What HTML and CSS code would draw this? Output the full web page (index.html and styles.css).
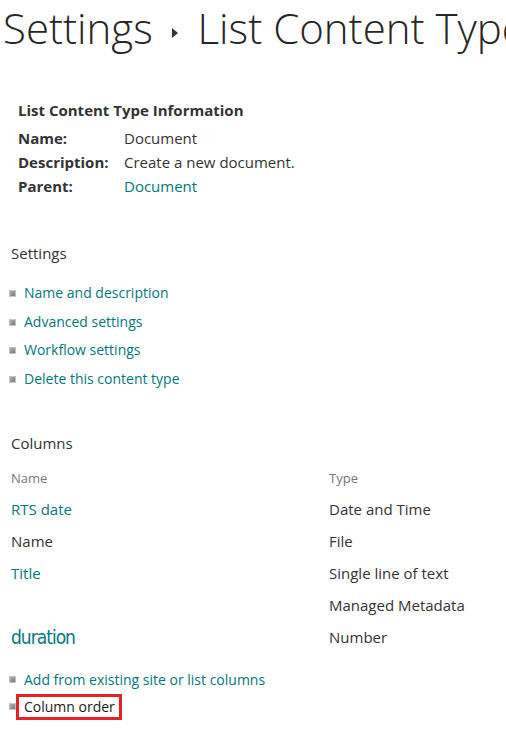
FILE: index.html
```html
<!DOCTYPE html>
<html lang="en">
<head>
    <meta charset="UTF-8">
    <title>Settings - List Content Type</title>
    <link rel="stylesheet" href="styles.css">
</head>
<body>
<div class="page">
    <h1 class="page-title">Settings <span class="crumb-arrow"></span> List Content Type</h1>

    <div class="info">
        <h2>List Content Type Information</h2>
        <div class="info-grid">
            <span class="label">Name:</span><span>Document</span>
            <span class="label">Description:</span><span>Create a new document.</span>
            <span class="label">Parent:</span><a href="#">Document</a>
        </div>
    </div>

    <h3 class="section-title">Settings</h3>
    <ul class="links">
        <li><a href="#">Name and description</a></li>
        <li><a href="#">Advanced settings</a></li>
        <li><a href="#">Workflow settings</a></li>
        <li><a href="#">Delete this content type</a></li>
    </ul>

    <h3 class="section-title columns-title">Columns</h3>
    <table class="columns">
        <thead>
            <tr><th>Name</th><th>Type</th></tr>
        </thead>
        <tbody>
            <tr><td><a href="#">RTS date</a></td><td>Date and Time</td></tr>
            <tr><td>Name</td><td>File</td></tr>
            <tr><td><a href="#">Title</a></td><td>Single line of text</td></tr>
            <tr><td></td><td>Managed Metadata</td></tr>
            <tr><td><a href="#" class="big">duration</a></td><td>Number</td></tr>
        </tbody>
    </table>

    <ul class="links bottom-links">
        <li><a href="#">Add from existing site or list columns</a></li>
        <li><a href="#" class="marked">Column order</a></li>
    </ul>
</div>
</body>
</html>
```

FILE: styles.css
```css
body {
    margin: 0;
    font-family: "Open Sans", "Noto Sans", sans-serif;
    font-size: 14px;
    color: #333;
    background: #fff;
    overflow: hidden;
}

a {
    color: #03787c;
    text-decoration: none;
}

.page {
    width: 506px;
}

.page-title {
    margin: -1px 0 0;
    padding: 0 0 0 3px;
    font-size: 42px;
    font-weight: 300;
    color: #262626;
    white-space: nowrap;
    overflow: hidden;
}

.crumb-arrow {
    display: inline-block;
    width: 0;
    height: 0;
    margin: 0 9px 0 8px;
    border-top: 5px solid transparent;
    border-bottom: 5px solid transparent;
    border-left: 6px solid #333;
    vertical-align: middle;
}

.info {
    padding: 42px 0 0 18px;
}

.info h2 {
    margin: 0 0 4px;
    font-size: 15px;
    font-weight: 700;
    line-height: 24px;
}

.info-grid {
    display: grid;
    grid-template-columns: 106px auto;
    line-height: 24px;
    font-size: 15px;
}

.label {
    font-weight: 700;
}

.section-title {
    margin: 43px 0 0 11px;
    font-size: 15px;
    font-weight: 400;
    line-height: 24px;
}

.links {
    list-style: none;
    margin: 14px 0 0;
    padding: 0;
    font-size: 14px;
    line-height: 28.7px;
}

.links li {
    display: flex;
    align-items: center;
}

.links li::before {
    content: "";
    width: 5px;
    height: 5px;
    margin: 0 8px 0 9px;
    border: 1px solid #c4c4c4;
    background: linear-gradient(135deg, #b0b0b0, #7a7a7a);
}

.columns-title {
    margin-top: 37px;
}

.columns {
    margin: 8px 0 0 11px;
    border-collapse: collapse;
    font-size: 15px;
}

.columns th {
    height: 30px;
    padding: 0;
    text-align: left;
    font-size: 13px;
    font-weight: 400;
    color: #777;
}

.columns td {
    height: 32px;
    padding: 0;
}

.columns th:first-child,
.columns td:first-child {
    width: 318px;
}

.big {
    font-family: "DejaVu Sans Condensed", "DejaVu Sans", sans-serif;
    font-size: 19px;
    font-stretch: condensed;
    letter-spacing: -1px;
}

.bottom-links {
    margin-top: 13px;
    line-height: 28px;
}

.marked {
    display: inline-block;
    line-height: 20px;
    padding: 0 4px 0 5px;
    margin: 0 -8px;
    border: 3px solid #e8202a;
    color: #1a1a1a;
}
```
